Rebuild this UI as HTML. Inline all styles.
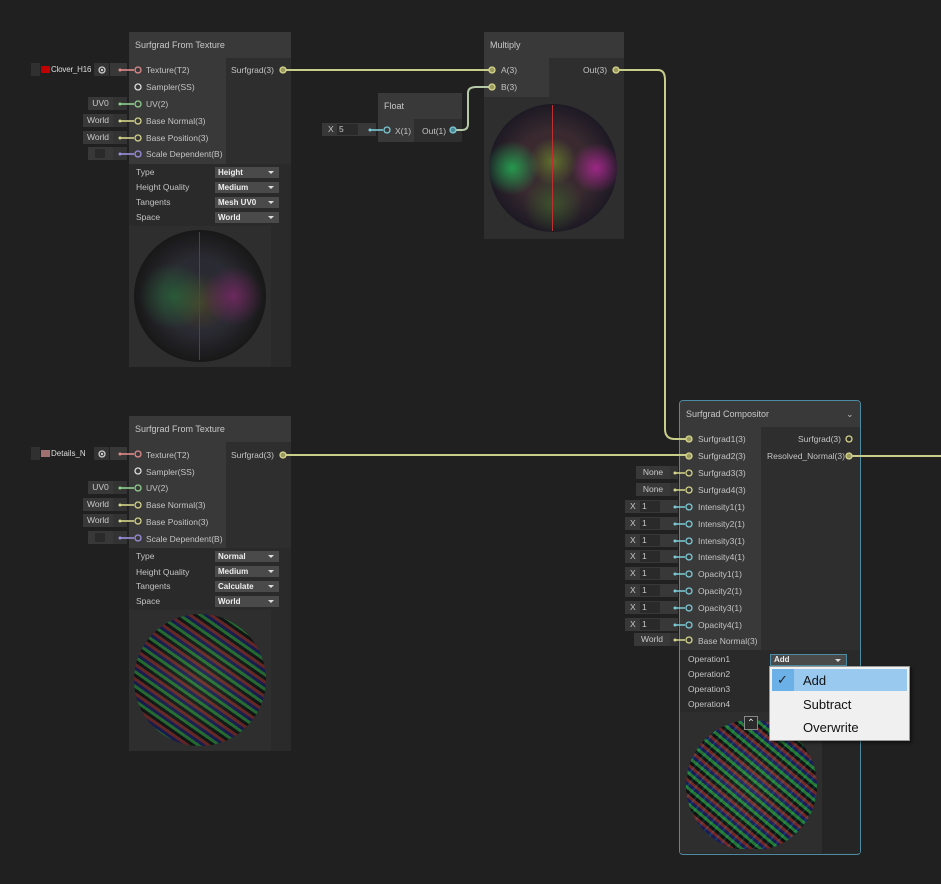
<!DOCTYPE html>
<html><head><meta charset="utf-8"><style>
*{margin:0;padding:0;box-sizing:border-box}
body{width:941px;height:884px;background:#202020;position:relative;overflow:hidden;font-family:"Liberation Sans",sans-serif;font-size:8.5px;color:#c4c4c4}
div,span{position:absolute}
.hd{background:#393939;color:#c8c8c8;font-size:9px;padding-left:6px;line-height:26px}
.in{background:#393939}
.out{background:#2e2e2e}
.set{background:#2a2a2a}
.pv{background:#2e2e2e}
.l{line-height:12px;white-space:nowrap}
.f{background:#383838;color:#c8c8c8;text-align:center;line-height:13px;height:13px}
.db{background:#2e2e2e;height:13px}
.dd{background:#4a4a4a;color:#eee;font-weight:bold;height:11px;line-height:11px;padding-left:3px;font-size:8px}
.dd:after{content:"";position:absolute;right:5px;top:4px;border:3px solid transparent;border-top:3px solid #ddd}
.xi{background:#2a2a2a;height:11px;top:1px;line-height:11px;padding-left:2px;text-align:left}
.sph{border-radius:50%;}
.pm{font-size:13px;color:#111;font-family:"Liberation Sans",sans-serif}
</style></head><body>

<!-- Node 1 -->
<div class="hd" style="left:129px;top:32px;width:162px;height:26px">Surfgrad From Texture</div>
<div class="in" style="left:129px;top:58px;width:97px;height:106px"></div>
<div class="out" style="left:226px;top:58px;width:65px;height:106px"></div>
<div class="set" style="left:129px;top:164px;width:162px;height:62px"></div>
<div class="pv" style="left:129px;top:226px;width:142px;height:141px"></div>
<div class="set" style="left:271px;top:226px;width:20px;height:141px"></div>
<div class="l" style="left:146px;top:64px">Texture(T2)</div>
<div class="l" style="left:146px;top:81px">Sampler(SS)</div>
<div class="l" style="left:146px;top:98px">UV(2)</div>
<div class="l" style="left:146px;top:115px">Base Normal(3)</div>
<div class="l" style="left:146px;top:132px">Base Position(3)</div>
<div class="l" style="left:146px;top:148px">Scale Dependent(B)</div>
<div class="l" style="left:231px;top:64px">Surfgrad(3)</div>
<div class="l" style="left:136px;top:166px">Type</div>
<div class="l" style="left:136px;top:181px">Height Quality</div>
<div class="l" style="left:136px;top:196px">Tangents</div>
<div class="l" style="left:136px;top:211px">Space</div>
<div class="dd" style="left:215px;top:167px;width:64px">Height</div>
<div class="dd" style="left:215px;top:182px;width:64px">Medium</div>
<div class="dd" style="left:215px;top:197px;width:64px">Mesh UV0</div>
<div class="dd" style="left:215px;top:212px;width:64px">World</div>
<div class="f" style="left:31px;top:63px;width:9px;background:#303030"></div>
<div style="left:41px;top:66px;width:9px;height:7px;background:#c00000"></div>
<div class="l" style="left:51px;top:64px;color:#ddd;font-size:8px;letter-spacing:-0.2px">Clover_H16</div>
<div class="f" style="left:94px;top:63px;width:15px;background:#333"></div>
<div class="db" style="left:110px;top:63px;width:17px;background:#383838"></div>
<div class="f" style="left:88px;top:97px;width:25px">UV0</div><div class="db" style="left:113px;top:97px;width:14px;background:#333"></div>
<div class="f" style="left:83px;top:114px;width:30px">World</div><div class="db" style="left:113px;top:114px;width:14px;background:#333"></div>
<div class="f" style="left:83px;top:131px;width:30px">World</div><div class="db" style="left:113px;top:131px;width:14px;background:#333"></div>
<div class="f" style="left:88px;top:147px;width:25px"></div><div style="left:95px;top:149px;width:10px;height:9px;background:#2a2a2a"></div><div class="db" style="left:113px;top:147px;width:14px;background:#333"></div>
<div class="sph" style="left:134px;top:230px;width:132px;height:132px;background:radial-gradient(circle at 30% 50%,rgba(40,120,60,.6),transparent 30%),radial-gradient(circle at 75% 50%,rgba(150,40,120,.6),transparent 25%),radial-gradient(circle at 50% 55%,rgba(90,80,40,.6),transparent 30%),radial-gradient(circle,#2a2a32 40%,#181818 70%,#0c1020 100%)"></div>
<div style="left:199px;top:232px;width:1px;height:128px;background:#8a2a2a"></div>

<!-- Node 2 -->
<div class="hd" style="left:129px;top:416px;width:162px;height:26px">Surfgrad From Texture</div>
<div class="in" style="left:129px;top:442px;width:97px;height:106px"></div>
<div class="out" style="left:226px;top:442px;width:65px;height:106px"></div>
<div class="set" style="left:129px;top:548px;width:162px;height:62px"></div>
<div class="pv" style="left:129px;top:610px;width:142px;height:141px"></div>
<div class="set" style="left:271px;top:610px;width:20px;height:141px"></div>
<div class="l" style="left:146px;top:449px">Texture(T2)</div>
<div class="l" style="left:146px;top:466px">Sampler(SS)</div>
<div class="l" style="left:146px;top:482px">UV(2)</div>
<div class="l" style="left:146px;top:499px">Base Normal(3)</div>
<div class="l" style="left:146px;top:516px">Base Position(3)</div>
<div class="l" style="left:146px;top:533px">Scale Dependent(B)</div>
<div class="l" style="left:231px;top:449px">Surfgrad(3)</div>
<div class="l" style="left:136px;top:550px">Type</div>
<div class="l" style="left:136px;top:566px">Height Quality</div>
<div class="l" style="left:136px;top:580px">Tangents</div>
<div class="l" style="left:136px;top:595px">Space</div>
<div class="dd" style="left:215px;top:551px;width:64px">Normal</div>
<div class="dd" style="left:215px;top:566px;width:64px">Medium</div>
<div class="dd" style="left:215px;top:581px;width:64px">Calculate</div>
<div class="dd" style="left:215px;top:596px;width:64px">World</div>
<div class="f" style="left:31px;top:447px;width:9px;background:#303030"></div>
<div style="left:41px;top:450px;width:9px;height:7px;background:#a07070"></div>
<div class="l" style="left:51px;top:448px;color:#ddd;font-size:8px">Details_N</div>
<div class="f" style="left:94px;top:447px;width:15px;background:#333"></div>
<div class="db" style="left:110px;top:447px;width:17px;background:#383838"></div>
<div class="f" style="left:88px;top:481px;width:25px">UV0</div><div class="db" style="left:113px;top:481px;width:14px;background:#333"></div>
<div class="f" style="left:83px;top:498px;width:30px">World</div><div class="db" style="left:113px;top:498px;width:14px;background:#333"></div>
<div class="f" style="left:83px;top:514px;width:30px">World</div><div class="db" style="left:113px;top:514px;width:14px;background:#333"></div>
<div class="f" style="left:88px;top:531px;width:25px"></div><div style="left:95px;top:533px;width:10px;height:9px;background:#2a2a2a"></div><div class="db" style="left:113px;top:531px;width:14px;background:#333"></div>
<div class="sph" style="left:134px;top:614px;width:132px;height:132px;background:repeating-linear-gradient(35deg,rgba(40,160,60,.55) 0 3px,rgba(20,20,120,.5) 3px 6px,rgba(170,40,40,.5) 6px 9px,rgba(0,0,0,.4) 9px 12px),radial-gradient(circle,#3a4a3a,#101418 95%)"></div>

<!-- Float -->
<div class="hd" style="left:378px;top:93px;width:84px;height:26px">Float</div>
<div class="in" style="left:378px;top:119px;width:36px;height:23px"></div>
<div class="out" style="left:414px;top:119px;width:48px;height:23px"></div>
<div class="l" style="left:395px;top:125px">X(1)</div>
<div class="l" style="left:422px;top:125px">Out(1)</div>
<div class="f" style="left:322px;top:123px;width:54px;text-align:left;padding-left:6px">X</div>
<div class="xi f" style="left:337px;top:124px;width:21px">5</div>

<!-- Multiply -->
<div class="hd" style="left:484px;top:32px;width:140px;height:26px">Multiply</div>
<div class="in" style="left:484px;top:58px;width:65px;height:39px"></div>
<div class="out" style="left:549px;top:58px;width:75px;height:39px"></div>
<div class="pv" style="left:484px;top:97px;width:140px;height:142px"></div>
<div class="l" style="left:501px;top:64px">A(3)</div>
<div class="l" style="left:501px;top:81px">B(3)</div>
<div class="l" style="left:583px;top:64px">Out(3)</div>
<div class="sph" style="left:489px;top:104px;width:128px;height:128px;background:radial-gradient(circle at 18% 50%,rgba(30,200,90,.7),transparent 22%),radial-gradient(circle at 84% 50%,rgba(200,40,170,.7),transparent 20%),radial-gradient(circle at 50% 45%,rgba(120,160,40,.6),transparent 25%),radial-gradient(circle at 50% 78%,rgba(60,120,40,.5),transparent 25%),radial-gradient(circle,#3a2a30 40%,#141420 80%,#1a1a50 100%)"></div>
<div style="left:552px;top:105px;width:1px;height:126px;background:#c03030"></div>

<!-- Compositor -->
<div style="left:679px;top:400px;width:182px;height:455px;border:1px solid #4d8ba3;border-radius:4px;background:#2a2a2a"></div>
<div class="hd" style="left:680px;top:401px;width:180px;height:26px;border-radius:3px 3px 0 0">Surfgrad Compositor</div>
<div style="left:846px;top:409px;color:#bbb;font-size:9px">⌄</div>
<div class="in" style="left:680px;top:427px;width:81px;height:223px"></div>
<div class="out" style="left:761px;top:427px;width:99px;height:223px"></div>
<div class="set" style="left:680px;top:650px;width:180px;height:62px"></div>
<div class="pv" style="left:680px;top:712px;width:142px;height:141px"></div>
<div style="left:822px;top:712px;width:38px;height:141px;background:#252525"></div>
<div class="l" style="left:698px;top:433px">Surfgrad1(3)</div>
<div class="l" style="left:698px;top:450px">Surfgrad2(3)</div>
<div class="l" style="left:698px;top:467px">Surfgrad3(3)</div>
<div class="l" style="left:698px;top:484px">Surfgrad4(3)</div>
<div class="l" style="left:698px;top:501px">Intensity1(1)</div>
<div class="l" style="left:698px;top:518px">Intensity2(1)</div>
<div class="l" style="left:698px;top:535px">Intensity3(1)</div>
<div class="l" style="left:698px;top:551px">Intensity4(1)</div>
<div class="l" style="left:698px;top:568px">Opacity1(1)</div>
<div class="l" style="left:698px;top:585px">Opacity2(1)</div>
<div class="l" style="left:698px;top:602px">Opacity3(1)</div>
<div class="l" style="left:698px;top:619px">Opacity4(1)</div>
<div class="l" style="left:698px;top:635px">Base Normal(3)</div>
<div class="l" style="left:798px;top:433px">Surfgrad(3)</div>
<div class="l" style="left:767px;top:450px">Resolved_Normal(3)</div>
<div class="l" style="left:688px;top:653px">Operation1</div>
<div class="l" style="left:688px;top:668px">Operation2</div>
<div class="l" style="left:688px;top:683px">Operation3</div>
<div class="l" style="left:688px;top:698px">Operation4</div>
<div class="dd" style="left:770px;top:654px;width:77px;border:1px solid #4d8ba3;height:12px;line-height:10px">Add</div>
<div class="f" style="left:636px;top:466px;width:34px">None</div><div class="db" style="left:670px;top:466px;width:8px;background:#333"></div>
<div class="f" style="left:636px;top:483px;width:34px">None</div><div class="db" style="left:670px;top:483px;width:8px;background:#333"></div>
<div class="f" style="left:625px;top:500px;width:53px;text-align:left;padding-left:5px">X</div><div class="xi f" style="left:640px;top:501px;width:20px">1</div>
<div class="f" style="left:625px;top:517px;width:53px;text-align:left;padding-left:5px">X</div><div class="xi f" style="left:640px;top:518px;width:20px">1</div>
<div class="f" style="left:625px;top:534px;width:53px;text-align:left;padding-left:5px">X</div><div class="xi f" style="left:640px;top:535px;width:20px">1</div>
<div class="f" style="left:625px;top:550px;width:53px;text-align:left;padding-left:5px">X</div><div class="xi f" style="left:640px;top:551px;width:20px">1</div>
<div class="f" style="left:625px;top:567px;width:53px;text-align:left;padding-left:5px">X</div><div class="xi f" style="left:640px;top:568px;width:20px">1</div>
<div class="f" style="left:625px;top:584px;width:53px;text-align:left;padding-left:5px">X</div><div class="xi f" style="left:640px;top:585px;width:20px">1</div>
<div class="f" style="left:625px;top:601px;width:53px;text-align:left;padding-left:5px">X</div><div class="xi f" style="left:640px;top:602px;width:20px">1</div>
<div class="f" style="left:625px;top:618px;width:53px;text-align:left;padding-left:5px">X</div><div class="xi f" style="left:640px;top:619px;width:20px">1</div>
<div class="f" style="left:634px;top:633px;width:36px">World</div><div class="db" style="left:670px;top:633px;width:8px;background:#333"></div>
<div class="sph" style="left:686px;top:720px;width:131px;height:131px;clip-path:inset(0 0 2px 0);background:repeating-linear-gradient(40deg,rgba(40,170,60,.6) 0 3px,rgba(20,20,140,.5) 3px 6px,rgba(180,40,40,.55) 6px 9px,rgba(0,0,0,.5) 9px 12px),repeating-linear-gradient(-50deg,rgba(30,190,180,.35) 0 2px,transparent 2px 7px),radial-gradient(circle,#3a4a3a,#101418 95%)"></div>
<div style="left:744px;top:716px;width:14px;height:14px;border:1px solid #888;background:#2a2a2a;color:#ddd;text-align:center;font-size:10px;line-height:14px">⌃</div>

<!-- popup -->
<div style="left:769px;top:666px;width:141px;height:75px;background:#f0f0f0;border:1px solid #999;box-shadow:2px 2px 3px rgba(0,0,0,.5)"></div>
<div style="left:772px;top:669px;width:135px;height:22px;background:#99c9ef"></div>
<div style="left:772px;top:669px;width:22px;height:22px;background:#6cb0e8"></div>
<div style="left:777px;top:672px;font-size:13px;color:#222">✓</div>
<div class="pm" style="left:803px;top:673px">Add</div>
<div class="pm" style="left:803px;top:697px">Subtract</div>
<div class="pm" style="left:803px;top:720px">Overwrite</div>

<svg width="941" height="884" style="position:absolute;left:0;top:0" fill="none">
<g stroke="#c9cd8a" stroke-width="2">
<path d="M283 70 H492"/>
<path d="M616 70 H658 Q665 70 665 80 V429 Q665 439 675 439 H689"/>
<path d="M283 455 H689"/>
<path d="M849 456 H941"/>
</g>
<path d="M453 130 H462 Q468 130 468 124 V93 Q468 87 476 87 H492" stroke="#b5c9a8" stroke-width="2"/>
<g stroke-width="1.6">
<path d="M120 70 H134" stroke="#e08a8a"/><path d="M120 104 H134" stroke="#8fd08f"/>
<path d="M120 121 H134" stroke="#d4d48a"/><path d="M120 138 H134" stroke="#d4d48a"/>
<path d="M120 154 H134" stroke="#9a90e0"/>
<path d="M120 454 H134" stroke="#e08a8a"/><path d="M120 488 H134" stroke="#8fd08f"/>
<path d="M120 505 H134" stroke="#d4d48a"/><path d="M120 521 H134" stroke="#d4d48a"/>
<path d="M120 538 H134" stroke="#9a90e0"/>
<path d="M370 130 H383" stroke="#7cc9d6"/>
<path d="M675 473 H685 M675 490 H685 M675 640 H685" stroke="#d4d48a"/>
<path d="M675 507 H685 M675 524 H685 M675 541 H685 M675 557 H685 M675 574 H685 M675 591 H685 M675 608 H685 M675 625 H685" stroke="#7cc9d6"/>
</g>
<g stroke-width="1.3">
<circle cx="138" cy="70" r="3" stroke="#e08a8a"/><circle cx="138" cy="87" r="3" stroke="#ddd"/>
<circle cx="138" cy="104" r="3" stroke="#8fd08f"/><circle cx="138" cy="121" r="3" stroke="#d4d48a"/>
<circle cx="138" cy="138" r="3" stroke="#d4d48a"/><circle cx="138" cy="154" r="3" stroke="#9a90e0"/>
<circle cx="138" cy="454" r="3" stroke="#e08a8a"/><circle cx="138" cy="471" r="3" stroke="#ddd"/>
<circle cx="138" cy="488" r="3" stroke="#8fd08f"/><circle cx="138" cy="505" r="3" stroke="#d4d48a"/>
<circle cx="138" cy="521" r="3" stroke="#d4d48a"/><circle cx="138" cy="538" r="3" stroke="#9a90e0"/>
<circle cx="283" cy="70" r="3" stroke="#d4d48a" fill="#9a9a60"/><circle cx="283" cy="455" r="3" stroke="#d4d48a" fill="#9a9a60"/>
<circle cx="387" cy="130" r="3" stroke="#7cc9d6"/><circle cx="453" cy="130" r="3" stroke="#7cc9d6" fill="#4a8a95"/>
<circle cx="492" cy="70" r="3" stroke="#d4d48a" fill="#9a9a60"/><circle cx="492" cy="87" r="3" stroke="#d4d48a" fill="#9a9a60"/>
<circle cx="616" cy="70" r="3" stroke="#d4d48a" fill="#9a9a60"/>
<circle cx="689" cy="439" r="3" stroke="#d4d48a" fill="#9a9a60"/><circle cx="689" cy="456" r="3" stroke="#d4d48a" fill="#9a9a60"/>
<circle cx="689" cy="473" r="3" stroke="#d4d48a"/><circle cx="689" cy="490" r="3" stroke="#d4d48a"/>
<circle cx="689" cy="507" r="3" stroke="#7cc9d6"/><circle cx="689" cy="524" r="3" stroke="#7cc9d6"/>
<circle cx="689" cy="541" r="3" stroke="#7cc9d6"/><circle cx="689" cy="557" r="3" stroke="#7cc9d6"/>
<circle cx="689" cy="574" r="3" stroke="#7cc9d6"/><circle cx="689" cy="591" r="3" stroke="#7cc9d6"/>
<circle cx="689" cy="608" r="3" stroke="#7cc9d6"/><circle cx="689" cy="625" r="3" stroke="#7cc9d6"/>
<circle cx="689" cy="640" r="3" stroke="#d4d48a"/>
<circle cx="849" cy="439" r="3" stroke="#d4d48a"/><circle cx="849" cy="456" r="3" stroke="#d4d48a" fill="#9a9a60"/>
<circle cx="102" cy="70" r="3" stroke="#ccc"/><circle cx="102" cy="454" r="3" stroke="#ccc"/>
</g>
<g>
<circle cx="102" cy="70" r="1.2" fill="#ccc"/><circle cx="102" cy="454" r="1.2" fill="#ccc"/>
<circle cx="120" cy="70" r="1.5" fill="#e08a8a"/><circle cx="120" cy="104" r="1.5" fill="#8fd08f"/>
<circle cx="120" cy="121" r="1.5" fill="#d4d48a"/><circle cx="120" cy="138" r="1.5" fill="#d4d48a"/>
<circle cx="120" cy="154" r="1.5" fill="#9a90e0"/>
<circle cx="120" cy="454" r="1.5" fill="#e08a8a"/><circle cx="120" cy="488" r="1.5" fill="#8fd08f"/>
<circle cx="120" cy="505" r="1.5" fill="#d4d48a"/><circle cx="120" cy="521" r="1.5" fill="#d4d48a"/>
<circle cx="120" cy="538" r="1.5" fill="#9a90e0"/>
<circle cx="370" cy="130" r="1.5" fill="#7cc9d6"/>
<circle cx="675" cy="473" r="1.5" fill="#d4d48a"/><circle cx="675" cy="490" r="1.5" fill="#d4d48a"/><circle cx="675" cy="640" r="1.5" fill="#d4d48a"/>
<circle cx="675" cy="507" r="1.5" fill="#7cc9d6"/><circle cx="675" cy="524" r="1.5" fill="#7cc9d6"/><circle cx="675" cy="541" r="1.5" fill="#7cc9d6"/><circle cx="675" cy="557" r="1.5" fill="#7cc9d6"/>
<circle cx="675" cy="574" r="1.5" fill="#7cc9d6"/><circle cx="675" cy="591" r="1.5" fill="#7cc9d6"/><circle cx="675" cy="608" r="1.5" fill="#7cc9d6"/><circle cx="675" cy="625" r="1.5" fill="#7cc9d6"/>
</g>
</svg>
</body></html>
